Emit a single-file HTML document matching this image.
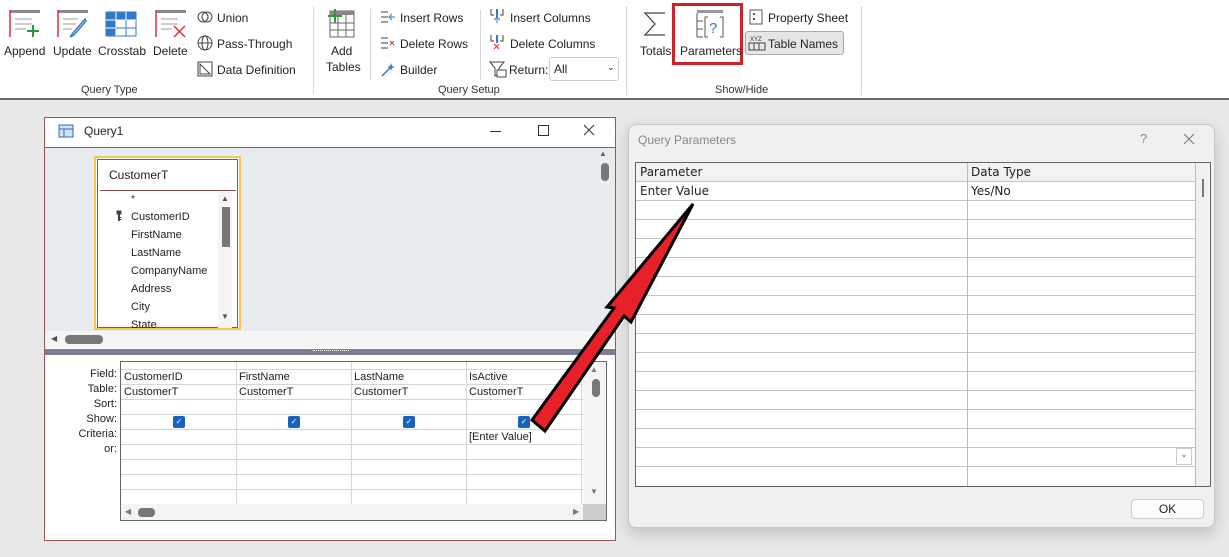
<!DOCTYPE html>
<html><head><style>
*{margin:0;padding:0;box-sizing:border-box}
body{width:1229px;height:557px;background:#e9e9e9;font-family:"Liberation Sans",sans-serif;font-size:12px;color:#222;position:relative;overflow:hidden}
.a{position:absolute}
.rib{left:0;top:0;width:1229px;height:100px;background:#fff;border-bottom:2px solid #6a6a6a}
.t{position:absolute;white-space:nowrap;font-size:12px}
.grp{position:absolute;top:84px;font-size:11px;color:#333}
.sep{position:absolute;top:6px;width:1px;height:88px;background:#d8d8d8}
.gl{position:absolute;background:#d6d6d6}
.cb{position:absolute;width:12px;height:12px;background:#1664c0;border-radius:2px;color:#fff;font-size:8px;text-align:center;line-height:12px}
.lbl{position:absolute;right:0;font-size:11px}
</style></head><body>
<div class="a rib">
 <svg class="a" style="left:8px;top:9px" width="34" height="30"><rect x="2" y="1" width="30" height="3" fill="#888"/><line x1="2" y1="1" x2="2" y2="28" stroke="#d33" stroke-width="1.5"/><g stroke="#999"><line x1="7" y1="10" x2="24" y2="10"/><line x1="7" y1="15" x2="24" y2="15"/><line x1="7" y1="20" x2="18" y2="20"/></g><path d="M25 16v12M19 22h12" stroke="#2a9a3a" stroke-width="2"/></svg>
 <div class="t" style="left:4px;top:44px">Append</div>
 <svg class="a" style="left:56px;top:9px" width="34" height="30"><rect x="2" y="1" width="30" height="3" fill="#888"/><line x1="2" y1="1" x2="2" y2="28" stroke="#d33" stroke-width="1.5"/><g stroke="#999"><line x1="7" y1="10" x2="22" y2="10"/><line x1="7" y1="15" x2="20" y2="15"/><line x1="7" y1="20" x2="16" y2="20"/></g><path d="M29 10l-12 14-3 4 4-2 12-14z" fill="none" stroke="#3a7cc0" stroke-width="1.5"/></svg>
 <div class="t" style="left:53px;top:44px">Update</div>
 <svg class="a" style="left:105px;top:11px" width="32" height="26"><rect x="1" y="1" width="30" height="24" fill="#fff" stroke="#2f7bc8"/><rect x="1" y="1" width="30" height="8" fill="#2f7bc8"/><rect x="1" y="1" width="10" height="24" fill="#2f7bc8"/><g stroke="#fff"><line x1="11" y1="1" x2="11" y2="25"/><line x1="21" y1="1" x2="21" y2="25"/><line x1="1" y1="9" x2="31" y2="9"/><line x1="1" y1="17" x2="31" y2="17"/></g><g stroke="#2f7bc8"><line x1="21" y1="9" x2="21" y2="25"/><line x1="11" y1="17" x2="31" y2="17"/></g></svg>
 <div class="t" style="left:98px;top:44px">Crosstab</div>
 <svg class="a" style="left:154px;top:9px" width="34" height="30"><rect x="2" y="1" width="30" height="3" fill="#888"/><line x1="2" y1="1" x2="2" y2="28" stroke="#d33" stroke-width="1.5"/><g stroke="#999"><line x1="7" y1="10" x2="24" y2="10"/><line x1="7" y1="15" x2="24" y2="15"/><line x1="7" y1="20" x2="18" y2="20"/></g><path d="M20 17l11 11M31 17l-11 11" stroke="#d33" stroke-width="1.5"/></svg>
 <div class="t" style="left:153px;top:44px">Delete</div>
 <svg class="a" style="left:197px;top:9px" width="16" height="16"><circle cx="6" cy="8" r="5" fill="none" stroke="#444"/><circle cx="10" cy="8" r="5" fill="none" stroke="#444"/></svg>
 <div class="t" style="left:217px;top:11px">Union</div>
 <svg class="a" style="left:197px;top:35px" width="16" height="16"><circle cx="8" cy="8" r="7" fill="none" stroke="#444"/><ellipse cx="8" cy="8" rx="3" ry="7" fill="none" stroke="#444"/><line x1="1" y1="8" x2="15" y2="8" stroke="#444"/></svg>
 <div class="t" style="left:217px;top:37px">Pass-Through</div>
 <svg class="a" style="left:197px;top:61px" width="16" height="16"><rect x="1" y="1" width="14" height="14" fill="none" stroke="#444"/><path d="M3 3l10 10H3z" fill="none" stroke="#444"/></svg>
 <div class="t" style="left:217px;top:63px">Data Definition</div>
 <div class="grp" style="left:81px">Query Type</div>
 <div class="sep" style="left:313px"></div>
 <svg class="a" style="left:326px;top:9px" width="30" height="30"><rect x="4" y="2" width="24" height="26" fill="#fff" stroke="#666"/><rect x="4" y="2" width="24" height="4" fill="#888"/><g stroke="#666"><line x1="12" y1="6" x2="12" y2="28"/><line x1="20" y1="6" x2="20" y2="28"/><line x1="4" y1="14" x2="28" y2="14"/><line x1="4" y1="21" x2="28" y2="21"/></g><path d="M9 0v14M2 7h14" stroke="#2a9a3a" stroke-width="2"/></svg>
 <div class="t" style="left:331px;top:44px">Add</div>
 <div class="t" style="left:326px;top:60px">Tables</div>
 <div class="sep" style="left:370px;top:10px;height:70px"></div>
 <svg class="a" style="left:380px;top:10px" width="16" height="14"><g stroke="#345"><line x1="1" y1="2" x2="8" y2="2"/><line x1="1" y1="7" x2="8" y2="7"/><line x1="1" y1="12" x2="8" y2="12"/></g><path d="M15 7H10M12 4l-3 3 3 3" stroke="#2f7bc8" fill="none"/></svg>
 <div class="t" style="left:400px;top:11px">Insert Rows</div>
 <svg class="a" style="left:380px;top:36px" width="16" height="14"><g stroke="#345"><line x1="1" y1="2" x2="8" y2="2"/><line x1="1" y1="7" x2="8" y2="7"/><line x1="1" y1="12" x2="8" y2="12"/></g><path d="M10 5l4 4M14 5l-4 4" stroke="#d33"/></svg>
 <div class="t" style="left:400px;top:37px">Delete Rows</div>
 <svg class="a" style="left:380px;top:61px" width="16" height="16"><path d="M2 15L10 7" stroke="#2f7bc8" stroke-width="1.5"/><path d="M11 2l1 3 3 1-3 1-1 3-1-3-3-1 3-1z" fill="#2f7bc8"/></svg>
 <div class="t" style="left:400px;top:63px">Builder</div>
 <div class="sep" style="left:480px;top:10px;height:70px"></div>
 <svg class="a" style="left:489px;top:8px" width="16" height="16"><path d="M2 1v6h3M14 1v6h-3" stroke="#345" fill="none"/><rect x="7" y="1" width="2" height="8" fill="#2f7bc8"/><path d="M8 15V10M5 12l3-3 3 3" stroke="#2f7bc8" fill="none"/></svg>
 <div class="t" style="left:510px;top:11px">Insert Columns</div>
 <svg class="a" style="left:489px;top:34px" width="16" height="16"><path d="M2 1v6h3M14 1v6h-3" stroke="#345" fill="none"/><rect x="7" y="1" width="2" height="8" fill="#2f7bc8"/><path d="M5 10l5 5M10 10l-5 5" stroke="#d33"/></svg>
 <div class="t" style="left:510px;top:37px">Delete Columns</div>
 <svg class="a" style="left:489px;top:60px" width="18" height="18"><path d="M1 2h14l-5 6v6l-4 2V8z" fill="none" stroke="#444"/><rect x="8" y="10" width="9" height="7" fill="#fff" stroke="#444"/></svg>
 <div class="t" style="left:509px;top:63px">Return:</div>
 <div class="a" style="left:549px;top:57px;width:70px;height:24px;border:1px solid #ccc;border-radius:3px;background:#fff"><span class="t" style="left:4px;top:4px">All</span><span class="t" style="left:57px;top:4px;font-size:9px">&#x2304;</span></div>
 <div class="grp" style="left:438px">Query Setup</div>
 <div class="sep" style="left:626px"></div>
 <svg class="a" style="left:643px;top:11px" width="24" height="26"><path d="M22 2H2l10 11L2 24h20" fill="none" stroke="#444" stroke-width="1.3"/></svg>
 <div class="t" style="left:640px;top:44px">Totals</div>
 <div class="a" style="left:672px;top:3px;width:71px;height:62px;border:3px solid #d0202a"></div>
 <svg class="a" style="left:695px;top:9px" width="30" height="32"><rect x="2" y="1" width="26" height="3" fill="#999"/><g stroke="#555" fill="none"><path d="M2 4v24M2 12h6M2 20h6M2 28h6"/><path d="M13 8h-3v20h3M25 8h3v20h-3"/></g><text x="14" y="24" font-size="15" fill="#2f7bc8" font-family="Liberation Sans">?</text></svg>
 <div class="t" style="left:680px;top:44px">Parameters</div>
 <svg class="a" style="left:749px;top:9px" width="14" height="16"><rect x="1" y="1" width="12" height="14" fill="none" stroke="#555"/><rect x="4" y="4" width="2" height="2" fill="#555"/><rect x="4" y="9" width="2" height="2" fill="#555"/></svg>
 <div class="t" style="left:768px;top:11px">Property Sheet</div>
 <div class="a" style="left:745px;top:31px;width:99px;height:24px;background:#e6e6e6;border:1px solid #aaa;border-radius:3px"></div>
 <svg class="a" style="left:748px;top:35px" width="18" height="16"><text x="2" y="6" font-size="6" fill="#333" font-family="Liberation Sans">XYZ</text><rect x="1" y="8" width="16" height="7" fill="none" stroke="#444"/><line x1="6" y1="8" x2="6" y2="15" stroke="#444"/><line x1="11" y1="8" x2="11" y2="15" stroke="#444"/></svg>
 <div class="t" style="left:768px;top:37px">Table Names</div>
 <div class="grp" style="left:715px">Show/Hide</div>
 <div class="sep" style="left:861px"></div>
</div>

<div class="a" style="left:44px;top:117px;width:572px;height:424px;border:1px solid #a4525a;background:#fff">
 <svg class="a" style="left:13px;top:6px" width="16" height="14"><rect x="1" y="1" width="14" height="12" fill="#cfe0f2" stroke="#2f6fb0"/><line x1="1" y1="5" x2="15" y2="5" stroke="#2f6fb0"/><line x1="6" y1="5" x2="6" y2="13" stroke="#2f6fb0"/></svg>
 <div class="t" style="left:39px;top:6px">Query1</div>
 <div class="a" style="left:445px;top:13px;width:11px;height:1px;background:#333"></div>
 <div class="a" style="left:493px;top:7px;width:11px;height:11px;border:1px solid #333"></div>
 <svg class="a" style="left:538px;top:6px" width="12" height="12"><path d="M1 1l10 10M11 1L1 11" stroke="#333" stroke-width="1"/></svg>
 <div class="a" style="left:0;top:29px;width:570px;height:1px;background:#a4525a"></div>
 <div class="a" style="left:0;top:30px;width:570px;height:183px;background:#e9ecef"></div>
 <div class="t" style="left:554px;top:31px;font-size:8px;color:#666">&#9650;</div>
 <div class="a" style="left:556px;top:45px;width:8px;height:18px;background:#777;border-radius:4px"></div>
 <div class="a" style="left:49px;top:38px;width:147px;height:174px;border:2px solid #f6c74a;background:#fff">
  <div class="a" style="left:1px;top:1px;width:141px;height:169px;border:1px solid #8a5a2a"></div>
  <div class="t" style="left:13px;top:10px">CustomerT</div>
  <div class="a" style="left:4px;top:32px;width:136px;height:1px;background:#8a4a4a"></div>
  <div class="t" style="left:35px;top:36px;font-size:10px">*</div>
  <svg class="a" style="left:20px;top:52px" width="6" height="12"><rect x="0.5" y="0.5" width="5" height="4" fill="#444"/><rect x="2" y="4" width="2" height="7" fill="#444"/><rect x="4" y="7" width="1.5" height="1" fill="#444"/><rect x="4" y="9" width="1.5" height="1" fill="#444"/></svg>
  <div class="t" style="left:35px;top:53px;font-size:11px">CustomerID</div>
  <div class="t" style="left:35px;top:71px;font-size:11px">FirstName</div>
  <div class="t" style="left:35px;top:89px;font-size:11px">LastName</div>
  <div class="t" style="left:35px;top:107px;font-size:11px">CompanyName</div>
  <div class="t" style="left:35px;top:125px;font-size:11px">Address</div>
  <div class="t" style="left:35px;top:143px;font-size:11px">City</div>
  <div class="t" style="left:35px;top:161px;font-size:11px;height:9px;overflow:hidden">State</div>
  <div class="a" style="left:122px;top:34px;width:14px;height:136px;background:#f4f4f4"></div>
  <div class="t" style="left:125px;top:36px;font-size:8px;color:#555">&#9650;</div>
  <div class="a" style="left:126px;top:49px;width:8px;height:40px;background:#777"></div>
  <div class="t" style="left:125px;top:154px;font-size:8px;color:#555">&#9660;</div>
 </div>
 <div class="a" style="left:0;top:213px;width:570px;height:17px;background:#f5f5f5"></div>
 <div class="t" style="left:6px;top:216px;font-size:8px;color:#555">&#9664;</div>
 <div class="a" style="left:20px;top:217px;width:38px;height:9px;background:#777;border-radius:4px"></div>
 <div class="a" style="left:0;top:231px;width:570px;height:6px;background:#7d7d96"></div>
 <div class="a" style="left:268px;top:232px;width:36px;height:2px;border-top:1px dotted #fff"></div>
 <div class="a" style="left:75px;top:243px;width:487px;height:160px;border:1px solid #666;background:#fff;overflow:hidden">
  <div class="gl" style="left:0;top:7px;width:462px;height:1px"></div>
  <div class="gl" style="left:0;top:22px;width:462px;height:1px"></div>
  <div class="gl" style="left:0;top:37px;width:462px;height:1px"></div>
  <div class="gl" style="left:0;top:52px;width:462px;height:1px"></div>
  <div class="gl" style="left:0;top:67px;width:462px;height:1px"></div>
  <div class="gl" style="left:0;top:82px;width:462px;height:1px"></div>
  <div class="gl" style="left:0;top:97px;width:462px;height:1px"></div>
  <div class="gl" style="left:0;top:112px;width:462px;height:1px"></div>
  <div class="gl" style="left:0;top:127px;width:462px;height:1px"></div>
  <div class="gl" style="left:115px;top:0;width:1px;height:142px"></div>
  <div class="gl" style="left:230px;top:0;width:1px;height:142px"></div>
  <div class="gl" style="left:345px;top:0;width:1px;height:142px"></div>
  <div class="gl" style="left:460px;top:0;width:1px;height:142px"></div>
  <div class="t" style="left:3px;top:9px;font-size:11px">CustomerID</div>
  <div class="t" style="left:3px;top:24px;font-size:11px">CustomerT</div>
  <div class="t" style="left:118px;top:9px;font-size:11px">FirstName</div>
  <div class="t" style="left:118px;top:24px;font-size:11px">CustomerT</div>
  <div class="t" style="left:233px;top:9px;font-size:11px">LastName</div>
  <div class="t" style="left:233px;top:24px;font-size:11px">CustomerT</div>
  <div class="t" style="left:348px;top:9px;font-size:11px">IsActive</div>
  <div class="t" style="left:348px;top:24px;font-size:11px">CustomerT</div>
  <div class="cb" style="left:52px;top:54px">&#10003;</div>
  <div class="cb" style="left:167px;top:54px">&#10003;</div>
  <div class="cb" style="left:282px;top:54px">&#10003;</div>
  <div class="cb" style="left:397px;top:54px">&#10003;</div>
  <div class="t" style="left:348px;top:69px;font-size:11px">[Enter Value]</div>
  <div class="a" style="left:462px;top:0;width:24px;height:142px;background:#f4f4f4"></div>
  <div class="t" style="left:469px;top:3px;font-size:8px;color:#777">&#9650;</div>
  <div class="a" style="left:471px;top:17px;width:8px;height:18px;background:#777;border-radius:4px"></div>
  <div class="t" style="left:469px;top:125px;font-size:8px;color:#777">&#9660;</div>
  <div class="a" style="left:0;top:142px;width:486px;height:18px;background:#f4f4f4"></div>
  <div class="t" style="left:4px;top:145px;font-size:8px;color:#777">&#9664;</div>
  <div class="a" style="left:17px;top:146px;width:17px;height:9px;background:#777;border-radius:4px"></div>
  <div class="t" style="left:452px;top:145px;font-size:8px;color:#777">&#9654;</div>
  <div class="a" style="left:462px;top:142px;width:24px;height:18px;background:#ccc"></div>
 </div>
 <div class="a" style="left:0;top:250px;width:72px;height:90px">
  <div class="lbl" style="top:0">Field:</div>
  <div class="lbl" style="top:15px">Table:</div>
  <div class="lbl" style="top:30px">Sort:</div>
  <div class="lbl" style="top:45px">Show:</div>
  <div class="lbl" style="top:60px">Criteria:</div>
  <div class="lbl" style="top:75px">or:</div>
 </div>
</div>

<div class="a" style="left:628px;top:124px;width:587px;height:404px;background:#f0f0f0;border:1px solid #c8c8c8;border-radius:8px;box-shadow:0 6px 16px rgba(0,0,0,0.18)">
 <div class="t" style="left:9px;top:8px;color:#888">Query Parameters</div>
 <div class="t" style="left:511px;top:6px;color:#888;font-size:13px">?</div>
 <svg class="a" style="left:554px;top:8px" width="12" height="12"><path d="M1 1l10 10M11 1L1 11" stroke="#777" stroke-width="1"/></svg>
 <div class="a" style="left:6px;top:37px;width:576px;height:325px;border:1px solid #666;background:#fff;overflow:hidden">
  <div class="a" style="left:0;top:0;width:560px;height:18px;background:#f2f2f2"></div>
  <div id="rows"></div>
  <div class="gl" style="left:331px;top:0;width:1px;height:325px;background:#bbb"></div>
  <div class="gl" style="left:559px;top:0;width:1px;height:325px;background:#bbb"></div>
  <div class="t" style="left:4px;top:2px;font-family:'DejaVu Sans',sans-serif">Parameter</div>
  <div class="t" style="left:335px;top:2px;font-family:'DejaVu Sans',sans-serif">Data Type</div>
  <div class="t" style="left:4px;top:21px;font-family:'DejaVu Sans',sans-serif">Enter Value</div>
  <div class="t" style="left:335px;top:21px;font-family:'DejaVu Sans',sans-serif">Yes/No</div>
  <div class="a" style="left:560px;top:0;width:16px;height:325px;background:#f0f0f0"></div>
  <div class="a" style="left:566px;top:16px;width:2px;height:18px;background:#777"></div>
  <div class="a" style="left:540px;top:285px;width:16px;height:17px;border:1px solid #ccc;background:#fff;font-size:9px;text-align:center;color:#555">&#x2304;</div>
 </div>
 <div class="a" style="left:502px;top:374px;width:73px;height:20px;background:#fdfdfd;border:1px solid #ccc;border-radius:4px;text-align:center;line-height:18px;font-size:12px">OK</div>
</div>
<script>
var h='';for(var i=1;i<17;i++){h+='<div class="gl" style="left:0;top:'+(i*19-1)+'px;width:560px;height:1px;background:#c4c4c4"></div>'}
document.getElementById('rows').innerHTML=h;
</script>

<svg class="a" style="left:0;top:0" width="1229" height="557"><polygon points="693,204 631,322 624,316 545,431 532,420 614,308 607,307" fill="#e8202a" stroke="#000" stroke-width="3" stroke-linejoin="miter"/></svg>
</body></html>
